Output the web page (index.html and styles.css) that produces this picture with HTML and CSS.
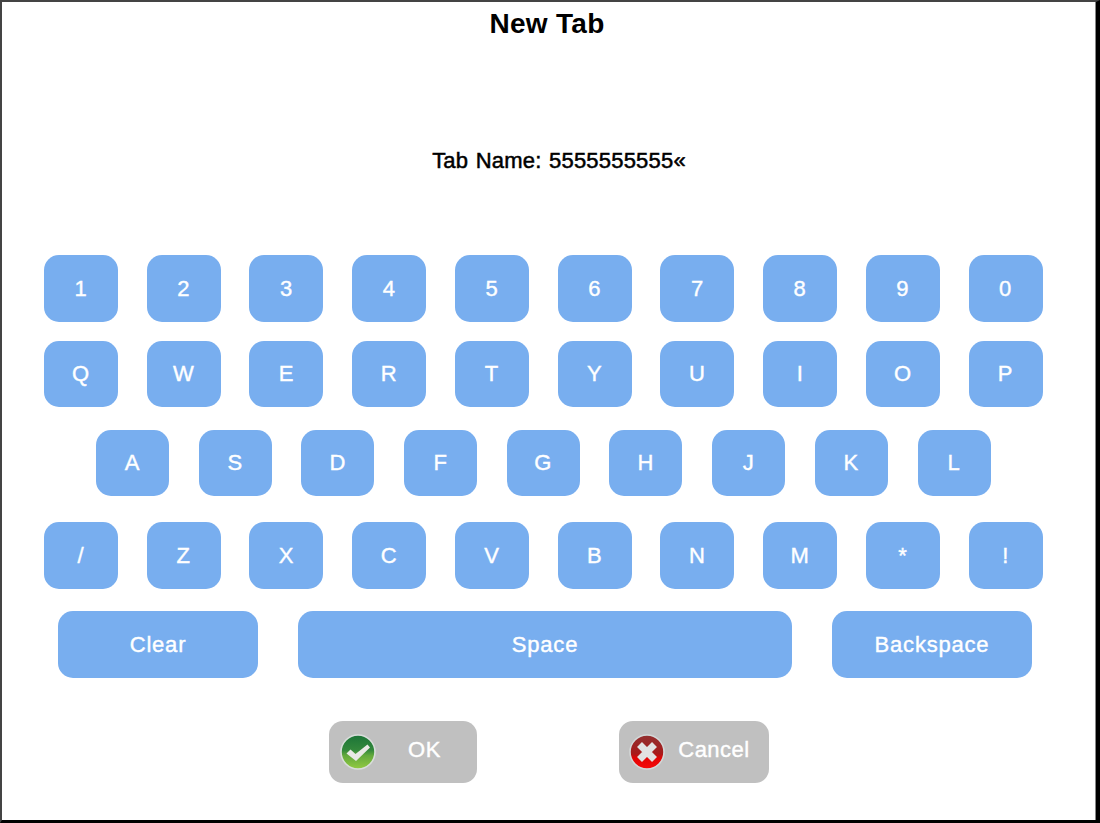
FILE: index.html
```html
<!DOCTYPE html>
<html lang="en">
<head>
    <meta charset="UTF-8">
    <title>New Tab</title>
    <link rel="stylesheet" href="styles.css">
</head>
<body>
<div class="screen">
    <h1 class="title">New Tab</h1>
    <p class="tab-name">Tab Name: 5555555555«</p>

    <div class="keyboard">
        <div class="row row-digits">
            <div class="key">1</div><div class="key">2</div><div class="key">3</div><div class="key">4</div><div class="key">5</div>
            <div class="key">6</div><div class="key">7</div><div class="key">8</div><div class="key">9</div><div class="key">0</div>
        </div>
        <div class="row row-top">
            <div class="key">Q</div><div class="key">W</div><div class="key">E</div><div class="key">R</div><div class="key">T</div>
            <div class="key">Y</div><div class="key">U</div><div class="key">I</div><div class="key">O</div><div class="key">P</div>
        </div>
        <div class="row row-home">
            <div class="key">A</div><div class="key">S</div><div class="key">D</div><div class="key">F</div><div class="key">G</div>
            <div class="key">H</div><div class="key">J</div><div class="key">K</div><div class="key">L</div>
        </div>
        <div class="row row-bottom">
            <div class="key">/</div><div class="key">Z</div><div class="key">X</div><div class="key">C</div><div class="key">V</div>
            <div class="key">B</div><div class="key">N</div><div class="key">M</div><div class="key">*</div><div class="key">!</div>
        </div>
        <div class="row row-space">
            <div class="key key-wide">Clear</div>
            <div class="key key-space">Space</div>
            <div class="key key-wide">Backspace</div>
        </div>
    </div>

    <div class="actions">
        <div class="action action-ok">
            <svg class="action-icon" viewBox="0 0 36 36">
                <defs>
                    <linearGradient id="okFill" x1="0" y1="0" x2="0" y2="1">
                        <stop offset="0" stop-color="#1c7438"/>
                        <stop offset="0.45" stop-color="#34893c"/>
                        <stop offset="0.6" stop-color="#62a93c"/>
                        <stop offset="1" stop-color="#93cb42"/>
                    </linearGradient>
                </defs>
                <circle cx="18" cy="18" r="17" fill="url(#okFill)" stroke="#d9dedb" stroke-width="1.6"/>
                <!-- tick gets thinner towards its long end -->
                <path d="M6.5 19.5L10.5 15.5L15.5 20L27.5 10.5L30 13.5L16 27Z" fill="#e9e9e6"/>
            </svg>
            <span class="action-label">OK</span>
        </div>
        <div class="action action-cancel">
            <svg class="action-icon" viewBox="0 0 36 36">
                <defs>
                    <linearGradient id="cancelFill" x1="0" y1="0" x2="0" y2="1">
                        <stop offset="0" stop-color="#923030"/>
                        <stop offset="0.55" stop-color="#a81a1a"/>
                        <stop offset="0.68" stop-color="#e20404"/>
                        <stop offset="1" stop-color="#f70a0a"/>
                    </linearGradient>
                </defs>
                <circle cx="18" cy="18" r="17" fill="url(#cancelFill)" stroke="#d3d8d8" stroke-width="1.6"/>
                <path d="M10.5 10.5l15 15M25.5 10.5l-15 15" fill="none" stroke="#e2e2e2" stroke-width="7"/>
            </svg>
            <span class="action-label">Cancel</span>
        </div>
    </div>
</div>
</body>
</html>
```

FILE: styles.css
```css
* {
  box-sizing: border-box;
}
body {
  margin: 0;
  background-color: #fff;
  font-family: "Liberation Sans", Arial, sans-serif;
}
.screen {
  width: 1100px;
  height: 823px;
  border-style: solid;
  border-width: 2px 4px 3px 2px;
  border-color: #444 #000 #000 #444;
  background-color: #fff;
  box-shadow: inset -1px 0 0 #888;
  overflow: hidden;
}
.title {
  margin: 0;
  padding-right: 4px;
  height: 44px;
  line-height: 44px;
  font-size: 28px;
  font-weight: bold;
  letter-spacing: 0.3px;
  text-align: center;
  color: #000;
}
.tab-name {
  margin: 100px 0 0;
  padding-left: 20px;
  height: 30px;
  line-height: 30px;
  font-size: 22px;
  letter-spacing: 0.2px;
  word-spacing: 1.2px;
  -webkit-text-stroke: 0.5px #000;
  text-align: center;
  color: #000;
}
.keyboard {
  margin-top: 79px;
  padding-left: 42px;
}
.row {
  display: flex;
  gap: 28.74px;
}
.row-digits {
  height: 67px;
}
.row-top {
  height: 66px;
  margin-top: 19px;
}
.row-home {
  height: 66px;
  margin-top: 23px;
  padding-left: 52px;
  gap: 29.7px;
}
.row-bottom {
  height: 67px;
  margin-top: 26px;
}
.row-space {
  height: 67px;
  margin-top: 22px;
  padding-left: 14px;
  gap: 40px;
}
.key {
  display: flex;
  align-items: center;
  justify-content: center;
  width: 74px;
  border-radius: 15px;
  background-color: #78aeef;
  color: #fff;
  font-size: 22px;
  letter-spacing: 0.8px;
  -webkit-text-stroke: 0.4px #fff;
}
.row-home .key {
  width: 73px;
}
.key-wide {
  width: 200px;
}
.key-space {
  width: 494px;
}
.actions {
  display: flex;
  gap: 142px;
  margin-top: 43px;
  padding-left: 327px;
}
.action {
  display: flex;
  align-items: center;
  height: 62px;
  border-radius: 14px;
  background-color: #c0c0c0;
  color: #fff;
  font-size: 22px;
  letter-spacing: 0.5px;
  -webkit-text-stroke: 0.4px #fff;
}
.action-ok {
  width: 148px;
  padding: 0 4px 0 11px;
}
.action-cancel {
  width: 150px;
  padding: 0 6px 0 10px;
}
.action-icon {
  width: 36px;
  height: 36px;
  flex: none;
}
.action-label {
  flex: 1;
  padding-bottom: 4px;
  text-align: center;
}
```
